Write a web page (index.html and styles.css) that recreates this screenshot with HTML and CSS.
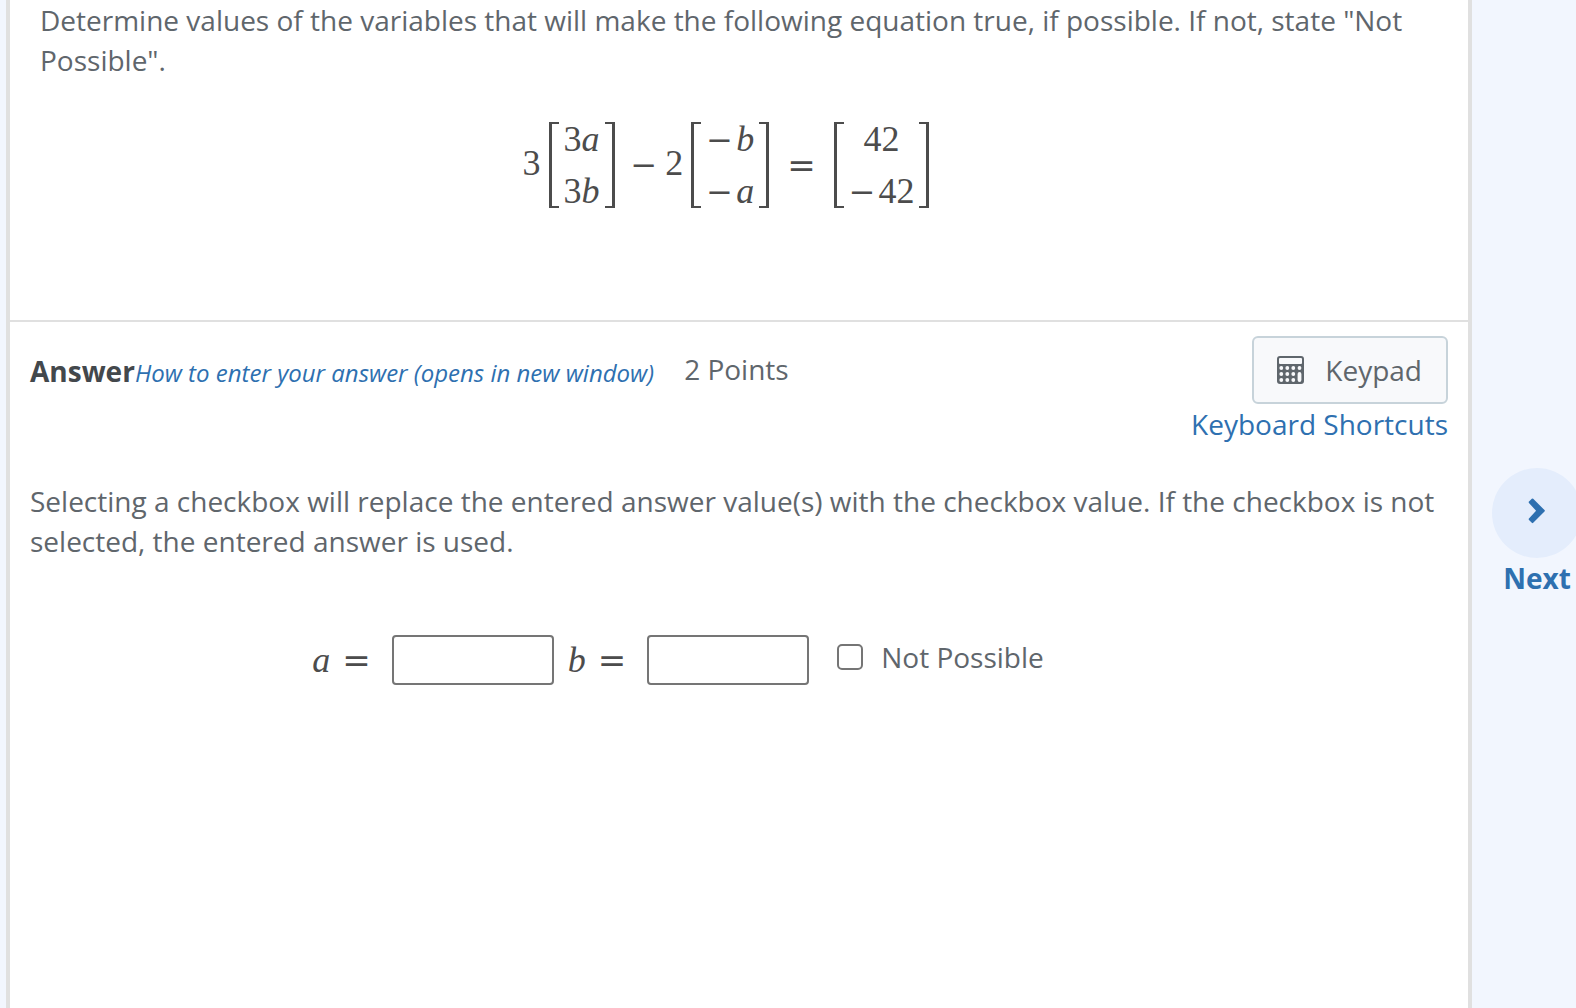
FILE: index.html
```html
<!DOCTYPE html>
<html lang="en">
<head>
<meta charset="utf-8">
<meta name="viewport" content="width=device-width, initial-scale=1">
<title>Matrix equation</title>
<link rel="stylesheet" href="styles.css">
</head>
<body>
<div class="page">
  <main class="panel">
    <section class="question">
      <p class="prompt">Determine values of the variables that will make the following equation true, if possible. If not, state "Not Possible".</p>
      <div class="equation">
        <span class="scalar">3</span>
        <span class="matrix"><span>3<i>a</i></span><span>3<i>b</i></span></span>
        <span class="op minus">−</span>
        <span class="scalar">2</span>
        <span class="matrix"><span class="term"><span class="op">−</span><i>b</i></span><span class="term"><span class="op">−</span><i>a</i></span></span>
        <span class="op equals">=</span>
        <span class="matrix"><span class="term">42</span><span class="term"><span class="op">−</span><span>42</span></span></span>
      </div>
    </section>
    <section class="answer">
      <header class="answer-head">
        <div class="answer-title">
          <div class="heading">
            <h2>Answer</h2><a class="help" href="#help">How to enter your answer (opens in new window)</a>
          </div>
          <span class="points">2 Points</span>
        </div>
        <div class="tools">
          <button class="keypad" type="button">
            <svg width="27" height="28" viewBox="0 0 27 28" aria-hidden="true">
              <rect width="27" height="28" rx="3" fill="#5f666c"/>
              <rect x="2" y="2" width="23" height="6" rx="1" fill="#f8f9fb"/>
              <g fill="#f8f9fb">
                <circle cx="4.300" cy="12" r="1.900"/><circle cx="10.300" cy="12" r="1.900"/><circle cx="16.300" cy="12" r="1.900"/><circle cx="22.500" cy="12" r="1.900"/>
                <circle cx="4.300" cy="18" r="1.900"/><circle cx="10.300" cy="18" r="1.900"/><circle cx="16.300" cy="18" r="1.900"/>
                <circle cx="4.300" cy="24" r="1.900"/><circle cx="10.300" cy="24" r="1.900"/><circle cx="16.300" cy="24" r="1.900"/>
                <rect x="20.600" y="16" width="3.800" height="10" rx="1.900"/>
              </g>
            </svg>
            Keypad
          </button>
          <a class="shortcuts" href="#shortcuts">Keyboard Shortcuts</a>
        </div>
      </header>
      <p class="note">Selecting a checkbox will replace the entered answer value(s) with the checkbox value. If the checkbox is not selected, the entered answer is used.</p>
      <form class="fields">
        <label class="field"><span class="name"><i>a</i><span class="op equals">=</span></span><input type="text"></label>
        <label class="field"><span class="name"><i>b</i><span class="op equals">=</span></span><input type="text"></label>
        <label class="check"><input type="checkbox">Not Possible</label>
      </form>
    </section>
  </main>
  <nav class="side">
    <a class="next" href="#next">
      <span class="next-circle">
        <svg width="18" height="26" viewBox="0 0 18 26" aria-hidden="true"><path d="M4.500 1.500 L15.800 12.800 L4.500 24.100 L1.700 21.300 L9.500 12.800 L1.700 4.300 Z" fill="#2e70b0" stroke="#2e70b0" stroke-width="2" stroke-linejoin="round"/></svg>
      </span>
      Next
    </a>
  </nav>
</div>
</body>
</html>
```

FILE: styles.css
```css
*, *::before, *::after { box-sizing: border-box; }

body {
  margin: 0;
  overflow-x: hidden;
  background: #f2f6fe;
  color: #5f666c;
  font: 28px/40px "Open Sans", "Noto Sans", sans-serif;
}

a { color: #2e70b0; text-decoration: none; }

p, h2 { margin: 0; }

.page {
  display: grid;
  grid-template-columns: minmax(0, 1fr) 104px;
  min-height: 100vh;
  padding-left: 6px;
}

.panel {
  background: #fff;
  border: solid #e0e0e0;
  border-width: 0 4px;
}

.question {
  padding: 0 56px 112px 30px;
  border-bottom: 2px solid #e0e0e0;
}

.equation {
  display: flex;
  justify-content: center;
  align-items: center;
  margin-top: 42px;
  color: #4c4c4c;
  font: 36px/52px "Liberation Serif", serif;
}

.scalar { padding-bottom: 4px; }

.op { font-family: "DejaVu Sans", sans-serif; font-size: 32px; }

.matrix {
  position: relative;
  display: grid;
  grid-auto-rows: 52px;
  justify-items: center;
  align-content: center;
  height: 86px;
  margin-left: 8px;
  padding: 0 15px;
}

.matrix::before,
.matrix::after {
  content: "";
  position: absolute;
  top: 0;
  bottom: 0;
  width: 10px;
  border: solid #4c4c4c;
}

.matrix::before { left: 0; border-width: 2px 0 2px 3px; }
.matrix::after { right: 0; border-width: 2px 3px 2px 0; }

.term {
  display: flex;
  align-items: baseline;
  gap: 3px;
}

.minus { margin: 0 8px 0 16px; }
.equals { font-size: 34px; }
.equation .equals { margin: 0 10px 0 18px; }

.answer { padding: 14px 20px; }

.answer-head {
  display: flex;
  justify-content: space-between;
}

.answer-title {
  display: flex;
  align-items: flex-start;
  padding-top: 13px;
}

.heading {
  display: flex;
  align-items: baseline;
  padding-top: 2px;
}

h2 {
  color: #43484c;
  font-size: 28px;
  line-height: 40px;
}

.help { font-size: 24px; font-style: italic; }

.points { margin-left: 30px; }

.tools {
  display: flex;
  flex-direction: column;
  align-items: flex-end;
}

.keypad {
  display: flex;
  align-items: center;
  gap: 21px;
  height: 68px;
  padding: 0 24px 0 23px;
  border: 2px solid #c7d3da;
  border-radius: 6px;
  background: #f8f9fb;
  color: inherit;
  font: inherit;
}

.note { margin-top: 37px; }

.fields {
  display: flex;
  justify-content: center;
  align-items: center;
  margin-top: 74px;
  padding-right: 122px;
}

.field { display: flex; align-items: center; }

.field + .field { margin-left: 14px; }

.name {
  display: flex;
  align-items: baseline;
  gap: 12px;
  margin-right: 21px;
  color: #4c4c4c;
  font: 36px/50px "Liberation Serif", serif;
}

.field input {
  width: 162px;
  height: 50px;
  padding: 0 10px;
  border: 2px solid #757575;
  border-radius: 4px;
  background: #fff;
  font: inherit;
}

.check {
  display: flex;
  align-items: center;
  gap: 18px;
  margin-left: 28px;
  padding-bottom: 6px;
}

.check input {
  appearance: none;
  width: 26px;
  height: 26px;
  margin: 0;
  border: 2px solid #757575;
  border-radius: 5px;
  background: #fff;
}

.side { padding: 468px 0 0 20px; }

.next {
  display: flex;
  flex-direction: column;
  align-items: center;
  width: 90px;
  font-weight: 700;
}

.next-circle {
  display: grid;
  place-items: center;
  width: 90px;
  height: 90px;
  padding-bottom: 4px;
  border-radius: 50%;
  background: #e4edfc;
}
```
